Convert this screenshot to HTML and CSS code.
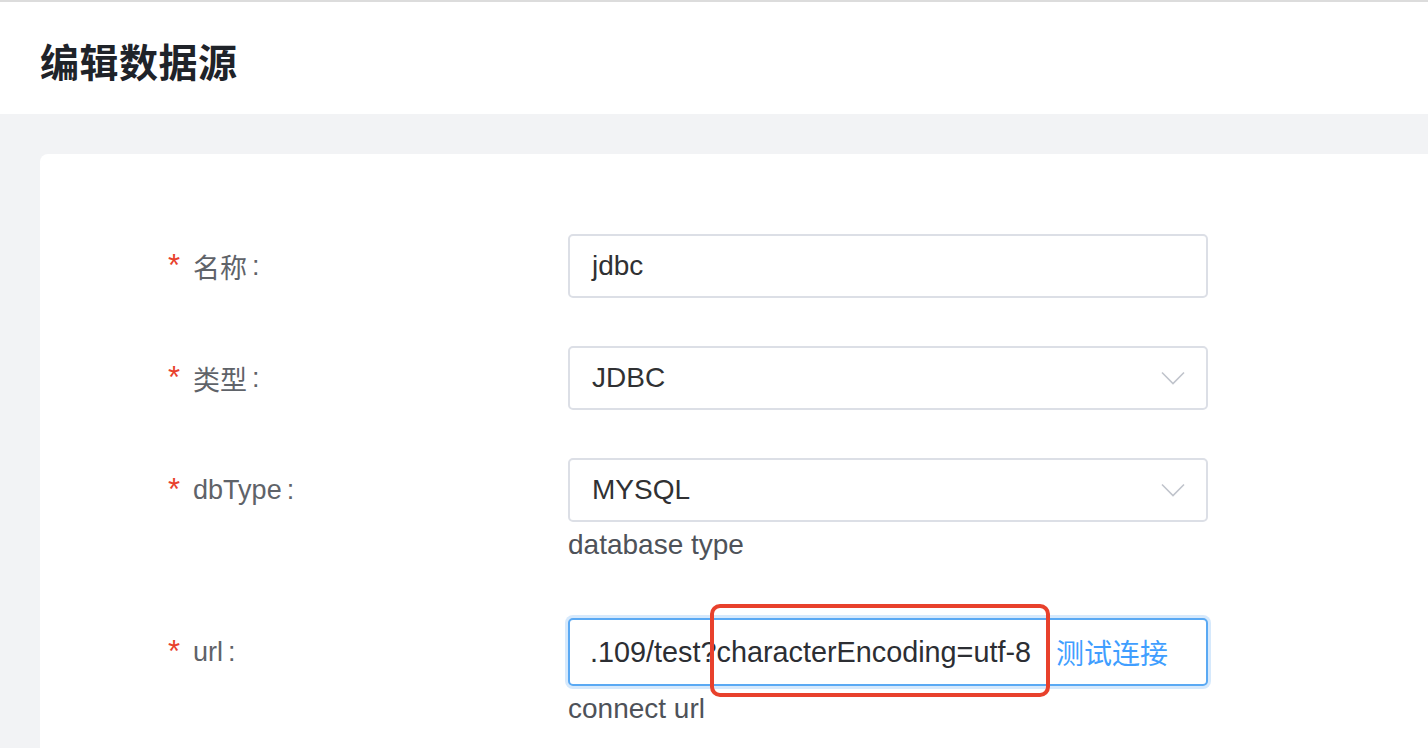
FILE: index.html
```html
<!DOCTYPE html>
<html lang="zh">
<head>
<meta charset="utf-8">
<title>编辑数据源</title>
<link rel="stylesheet" href="styles.css">
</head>
<body>
<div class="topline"></div>
<header class="header"><h1 class="title">编辑数据源</h1></header>
<main class="main">
  <section class="card">
    <form class="form">
      <div class="row">
        <label class="label"><span class="req">*</span>名称<span class="colon">:</span></label>
        <div class="control">
          <div class="field"><span class="value">jdbc</span></div>
        </div>
      </div>
      <div class="row">
        <label class="label"><span class="req">*</span>类型<span class="colon">:</span></label>
        <div class="control">
          <div class="field select"><span class="value">JDBC</span>
            <svg class="arrow" width="24" height="14" viewBox="0 0 24 14"><path d="M1 1.5 L12 12.5 L23 1.5" fill="none" stroke="#c0c4cc" stroke-width="1.6"/></svg>
          </div>
        </div>
      </div>
      <div class="row row-help">
        <label class="label"><span class="req">*</span>dbType<span class="colon">:</span></label>
        <div class="control">
          <div class="field select"><span class="value">MYSQL</span>
            <svg class="arrow" width="24" height="14" viewBox="0 0 24 14"><path d="M1 1.5 L12 12.5 L23 1.5" fill="none" stroke="#c0c4cc" stroke-width="1.6"/></svg>
          </div>
          <div class="help">database type</div>
        </div>
      </div>
      <div class="row row-last">
        <label class="label url-label"><span class="req">*</span>url<span class="colon">:</span></label>
        <div class="control">
          <div class="field focus">
            <span class="value url">.109/test?characterEncoding=utf-8</span>
            <a class="link">测试连接</a>
            <div class="highlight"></div>
          </div>
          <div class="help">connect url</div>
        </div>
      </div>
    </form>
  </section>
</main>
</body>
</html>
```

FILE: styles.css
```css
html, body {
  margin: 0;
  padding: 0;
  height: 748px;
  background: #f2f3f5;
  font-family: "Liberation Sans", "Noto Sans CJK SC", Arial, sans-serif;
  overflow: hidden;
}
.topline {
  height: 2px;
  background: #dcdcdc;
}
.header {
  height: 112px;
  background: #fff;
  display: flex;
  align-items: center;
}
.title {
  margin: 4px 0 0 40px;
  font-family: "Noto Sans CJK SC", sans-serif;
  font-size: 39px;
  font-weight: 700;
  color: #1f2329;
  letter-spacing: 0.5px;
}
.main {
  padding: 40px 0 0 40px;
}
.card {
  box-sizing: border-box;
  background: #fff;
  border-radius: 8px 0 0 0;
  height: 594px;
  overflow: hidden;
  padding: 80px 0 0 127px;
}
.form {
  display: flex;
  flex-direction: column;
}
.row {
  display: grid;
  grid-template-columns: 401px 640px;
  margin-bottom: 48px;
}
.row-help {
  margin-bottom: 50px;
}
.row-last {
  margin-bottom: 0;
}
.label {
  height: 64px;
  display: flex;
  align-items: center;
  font-family: "Liberation Sans", "Noto Sans CJK SC", sans-serif;
  font-size: 27px;
  color: #5f6369;
}
.url-label {
  height: 68px;
}
.colon {
  margin-left: 5px;
}
.req {
  color: #e8412c;
  font-family: "Liberation Sans", sans-serif;
  font-size: 31px;
  margin-left: 1px;
  margin-right: 13px;
}
.field {
  position: relative;
  height: 64px;
  box-sizing: border-box;
  border: 2px solid #dcdfe6;
  border-radius: 5px;
  display: flex;
  align-items: center;
  padding: 0 21px 0 22px;
  background: #fff;
}
.value {
  font-size: 28px;
  color: #303133;
  flex: 1;
}
.help {
  font-size: 28px;
  color: #4e5259;
  line-height: 46px;
}
.focus {
  height: 68px;
  border-color: #5aa9f3;
  box-shadow: 0 0 0 3px #d6e9fc;
  padding: 0 38px 0 20px;
}
.url {
  flex: none;
  font-size: 28.8px;
  color: #2c2e33;
  white-space: nowrap;
}
.link {
  margin-left: auto;
  font-family: "Noto Sans CJK SC", sans-serif;
  font-size: 28px;
  color: #409eff;
  white-space: nowrap;
}
.highlight {
  position: absolute;
  left: 140px;
  top: -16px;
  width: 340px;
  height: 93px;
  box-sizing: border-box;
  border: 4px solid #e8412c;
  border-radius: 10px;
}
```
